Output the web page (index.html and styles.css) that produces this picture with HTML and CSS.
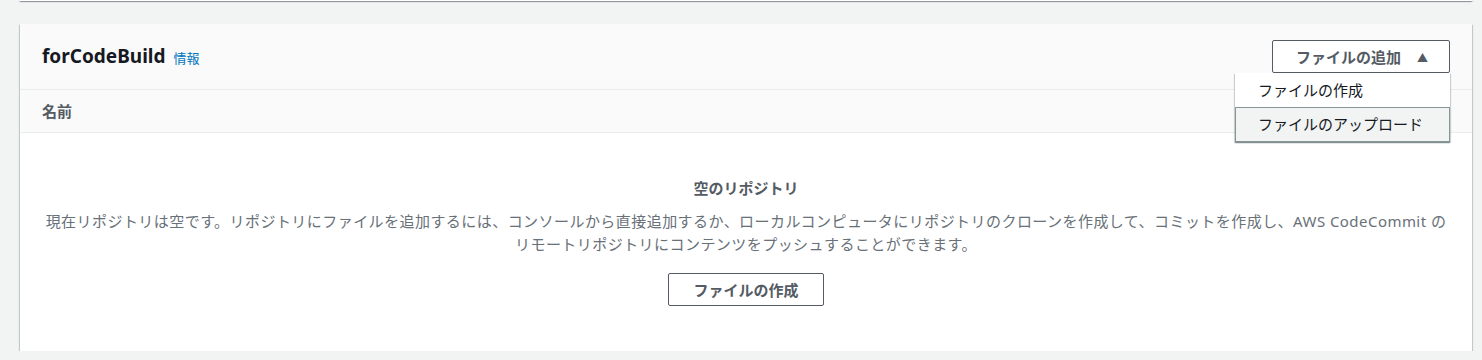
FILE: index.html
```html
<!DOCTYPE html>
<html lang="ja">
<head>
    <meta charset="UTF-8">
    <meta name="viewport" content="width=device-width, initial-scale=1.0">
    <title>forCodeBuild</title>
    <link rel="stylesheet" href="styles.css">
</head>
<body>
    <div class="page">
        <div class="card card-prev"></div>

        <div class="card">
            <div class="card-header">
                <div class="title-wrap">
                    <h2>forCodeBuild</h2>
                    <a href="#" class="info-link">情報</a>
                </div>
                <div class="dropdown">
                    <button class="btn btn-add">ファイルの追加 <span class="caret">&#9650;</span></button>
                    <ul class="dropdown-menu">
                        <li>ファイルの作成</li>
                        <li class="active">ファイルのアップロード</li>
                    </ul>
                </div>
            </div>

            <div class="col-header">名前</div>

            <div class="empty">
                <h3>空のリポジトリ</h3>
                <p>現在リポジトリは空です。リポジトリにファイルを追加するには、コンソールから直接追加するか、ローカルコンピュータにリポジトリのクローンを作成して、コミットを作成し、AWS CodeCommit の<br>リモートリポジトリにコンテンツをプッシュすることができます。</p>
                <button class="btn btn-create">ファイルの作成</button>
            </div>
        </div>
    </div>
</body>
</html>
```

FILE: styles.css
```css
body {
    margin: 0;
    padding: 0;
    background-color: #f2f3f3;
    font-family: "Noto Sans", "Noto Sans CJK JP", sans-serif;
    color: #16191f;
}

.page {
    padding: 0 10px 0 20px;
}

.card {
    background-color: #ffffff;
    box-shadow: 0 1px 1px 0 rgba(0, 28, 36, 0.3), 1px 1px 1px 0 rgba(0, 28, 36, 0.15), -1px 1px 1px 0 rgba(0, 28, 36, 0.15);
    position: relative;
}

.card-prev {
    height: 1px;
    margin-bottom: 23px;
}

.card-header {
    display: flex;
    justify-content: space-between;
    align-items: flex-start;
    height: 66px;
    box-sizing: border-box;
    padding: 16px 22px 0 22px;
    background-color: #fafafa;
    border-bottom: 1px solid #eaeded;
}

.title-wrap {
    display: flex;
    align-items: baseline;
    padding-top: 4px;
}

h2 {
    margin: 0;
    font-size: 19px;
    font-weight: 700;
    line-height: 24px;
    color: #16191f;
}

.info-link {
    margin-left: 8px;
    font-size: 13px;
    color: #0073bb;
    text-decoration: none;
}

.dropdown {
    position: relative;
}

.btn {
    font-family: "Noto Sans", "Noto Sans CJK JP", sans-serif;
    background-color: #ffffff;
    border: 1px solid #545b64;
    border-radius: 2px;
    color: #545b64;
    font-size: 15px;
    font-weight: 700;
    cursor: pointer;
}

.btn-add {
    width: 178px;
    height: 33px;
    padding: 0 0 0 2px;
}

.caret {
    font-size: 11px;
    margin-left: 12px;
    position: relative;
    top: -1px;
}

.dropdown-menu {
    position: absolute;
    top: 33px;
    right: 0;
    width: 215px;
    margin: 0;
    padding: 0;
    list-style: none;
    background-color: #ffffff;
    box-shadow: 0 1px 1px 0 rgba(0, 28, 36, 0.3), 1px 1px 1px 0 rgba(0, 28, 36, 0.15), -1px 1px 1px 0 rgba(0, 28, 36, 0.15);
    z-index: 10;
}

.dropdown-menu li {
    height: 34px;
    line-height: 32px;
    padding: 0 22px;
    font-size: 15px;
    color: #16191f;
    border: 1px solid transparent;
    box-sizing: border-box;
}

.dropdown-menu li.active {
    background-color: #f2f3f3;
    border-color: #879596;
    height: 35px;
}

.col-header {
    height: 43px;
    line-height: 42px;
    box-sizing: border-box;
    padding: 0 22px;
    background-color: #fafafa;
    border-bottom: 1px solid #eaeded;
    font-size: 15px;
    font-weight: 700;
    color: #545b64;
}

.empty {
    text-align: center;
    padding: 44px 20px 45px;
}

h3 {
    margin: 0 0 11px;
    font-size: 15px;
    font-weight: 700;
    line-height: 22px;
    color: #545b64;
}

.empty p {
    margin: 0 0 17px;
    font-size: 15px;
    line-height: 23px;
    color: #687078;
    letter-spacing: 0.45px;
}

.btn-create {
    width: 156px;
    height: 33px;
}
```
